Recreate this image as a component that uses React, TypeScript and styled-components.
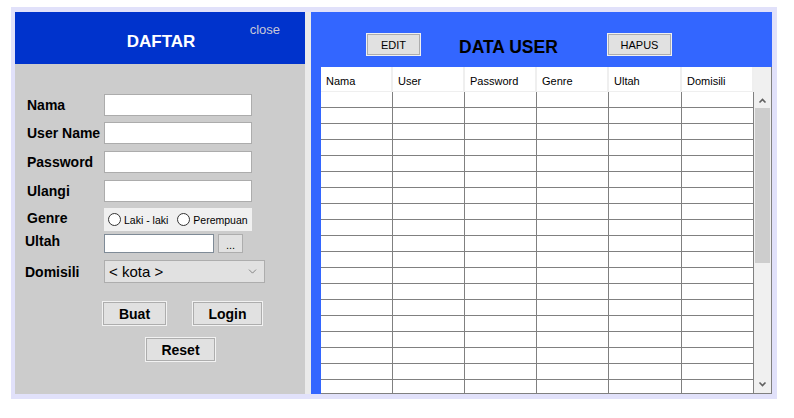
import React from "react";
import styled, { createGlobalStyle } from "styled-components";
import { ChevronDown } from "lucide-react";

const GlobalStyle = createGlobalStyle`
  html, body {
    margin: 0;
    padding: 0;
    background: #ffffff;
    font-family: "Liberation Sans", Arial, sans-serif;
  }
`;

const Frame = styled.div`
  margin: 7px 0 0 11px;
  width: 766px;
  height: 392px;
  box-sizing: border-box;
  padding: 5px 5px 5px 4px;
  background: #e1e1fa;
  display: flex;
`;

const LeftPanel = styled.div`
  width: 290px;
  display: flex;
  flex-direction: column;
  background: #cccccc;
`;

const Divider = styled.div`
  width: 6px;
  background: #eaeaea;
`;

const RightPanel = styled.div`
  width: 461px;
  display: flex;
  flex-direction: column;
  background: #3366ff;
  padding-left: 10px;
  box-sizing: border-box;
`;

const Header = styled.div`
  position: relative;
  height: 52px;
  background: #0033cc;
  display: flex;
  align-items: center;
  justify-content: center;
  padding: 8px 0 0 2px;
  box-sizing: border-box;
`;

const Title = styled.h1`
  margin: 0;
  font-size: 17px;
  font-weight: bold;
  color: #ffffff;
`;

const Close = styled.span`
  position: absolute;
  top: 10px;
  right: 25px;
  font-size: 13px;
  color: #c8c8d8;
  cursor: pointer;
`;

const Form = styled.div`
  display: flex;
  flex-direction: column;
  padding: 30px 0 0 12px;
`;

const Row = styled.div<{ $gap: number; $h: number }>`
  display: flex;
  align-items: center;
  height: ${({ $h }) => $h}px;
  margin-top: ${({ $gap }) => $gap}px;
`;

const Label = styled.label<{ $shift?: number; $raise?: number }>`
  flex-shrink: 0;
  width: ${({ $shift }) => 77 + ($shift || 0)}px;
  margin-left: ${({ $shift }) => -($shift || 0)}px;
  margin-top: ${({ $raise }) => -($raise || 0)}px;
  font-size: 14px;
  font-weight: bold;
  color: #000;
  white-space: nowrap;
`;

const TextInput = styled.input<{ $w: number; $dark?: boolean }>`
  flex-shrink: 0;
  width: ${({ $w }) => $w}px;
  height: 100%;
  box-sizing: border-box;
  border: 1px solid ${({ $dark }) => ($dark ? "#7f8b97" : "#acacac")};
  background: #ffffff;
  padding: 0 4px;
  outline: none;
`;

const RadioGroup = styled.div`
  flex-shrink: 0;
  width: 148px;
  height: 100%;
  background: #f0f0f0;
  display: flex;
  align-items: center;
  padding-left: 4px;
  box-sizing: border-box;
`;

const RadioOption = styled.label`
  display: flex;
  align-items: center;
  font-size: 10.5px;
  color: #000;
  white-space: nowrap;
  margin-right: 9px;
`;

const Circle = styled.span`
  flex-shrink: 0;
  width: 11px;
  height: 11px;
  border: 1px solid #333333;
  border-radius: 50%;
  background: #ffffff;
  margin-right: 3px;
`;

const SmallButton = styled.button`
  flex-shrink: 0;
  margin-left: 4px;
  width: 25px;
  height: 100%;
  box-sizing: border-box;
  background: #e1e1e1;
  border: 1px solid #adadad;
  font-family: "Liberation Sans", Arial, sans-serif;
  font-size: 11px;
  line-height: 1;
  padding: 4px 0 0;
`;

const Select = styled.div`
  flex-shrink: 0;
  width: 161px;
  height: 100%;
  box-sizing: border-box;
  background: #e1e1e1;
  border: 1px solid #adadad;
  display: flex;
  align-items: center;
  justify-content: space-between;
  padding: 0 5px 0 4px;
  font-size: 15px;
  color: #000;
`;

const ButtonRow = styled.div<{ $gap: number; $left: number }>`
  display: flex;
  gap: 25px;
  margin-top: ${({ $gap }) => $gap}px;
  padding-left: ${({ $left }) => $left - 12}px;
`;

const ActionButton = styled.button<{ $w: number }>`
  width: ${({ $w }) => $w}px;
  height: 25px;
  box-sizing: border-box;
  background: #e1e1e1;
  border: 1px solid #f2f2f2;
  box-shadow: inset 0 0 0 1px #adadad;
  font-family: "Liberation Sans", Arial, sans-serif;
  font-size: 14px;
  font-weight: bold;
  color: #000;
  padding: 0;
`;

const Toolbar = styled.div`
  height: 55px;
  display: flex;
  align-items: flex-start;
  padding: 21px 0 0 45px;
  box-sizing: border-box;
`;

const ToolButton = styled.button<{ $w: number }>`
  width: ${({ $w }) => $w}px;
  height: 23px;
  box-sizing: border-box;
  background: #e1e1e1;
  border: 1px solid #f0f0f0;
  box-shadow: inset 0 0 0 1px #adadad;
  font-family: "Liberation Sans", Arial, sans-serif;
  font-size: 11px;
  color: #000;
  padding: 0;
`;

const ToolTitle = styled.div`
  width: 148px;
  margin: 4px 0 0 38px;
  font-size: 17.5px;
  font-weight: bold;
  color: #000;
`;

const Table = styled.div`
  flex: 1;
  display: flex;
  flex-direction: column;
  border-right: 1px solid #808080;
  border-bottom: 1px solid #808080;
  overflow: hidden;
`;

const HeadRow = styled.div`
  display: grid;
  grid-template-columns: 72px 72px 72px 72px 73px 72px 1fr;
  height: 25px;
  flex-shrink: 0;
`;

const HeadCell = styled.div`
  background: #ffffff;
  border-right: 2px solid #efefef;
  border-bottom: 1px solid #efefef;
  font-size: 11px;
  color: #000;
  padding: 8px 0 0 5px;
  box-sizing: border-box;
`;

const HeadFiller = styled.div`
  background: #f0f0f0;
`;

const Body = styled.div`
  flex: 1;
  display: flex;
  overflow: hidden;
`;

const Rows = styled.div`
  width: 433px;
  display: flex;
  flex-direction: column;
`;

const DataRow = styled.div`
  display: grid;
  grid-template-columns: 72px 72px 72px 72px 73px 72px;
  height: 16px;
  flex-shrink: 0;
`;

const DataCell = styled.div`
  background: #ffffff;
  border-right: 1px solid #808080;
  border-bottom: 1px solid #808080;
`;

const Scrollbar = styled.div`
  flex: 1;
  background: #f0f0f0;
  display: flex;
  flex-direction: column;
  align-items: center;
  padding: 5px 0;
  box-sizing: border-box;
`;

const Thumb = styled.div`
  width: 15px;
  height: 155px;
  background: #cdcdcd;
  margin-top: 3px;
`;

const ArrowSpacer = styled.div`
  flex: 1;
`;

const Arrow = ({ down }: { down?: boolean }) => (
  <svg width="9" height="8" viewBox="0 0 9 8">
    <polyline
      points={down ? "1.5,2.5 4.5,5.5 7.5,2.5" : "1.5,5.5 4.5,2.5 7.5,5.5"}
      fill="none"
      stroke="#606060"
      strokeWidth="1.6"
    />
  </svg>
);

const headers = ["Nama", "User", "Password", "Genre", "Ultah", "Domisili"];

const App: React.FC = () => {
  const rows = Array.from({ length: 19 }, (_, i) => i);

  return (
    <>
      <GlobalStyle />
      <Frame>
        <LeftPanel>
          <Header>
            <Title>DAFTAR</Title>
            <Close>close</Close>
          </Header>
          <Form>
            <Row $gap={0} $h={22}>
              <Label>Nama</Label>
              <TextInput $w={148} />
            </Row>
            <Row $gap={6} $h={22}>
              <Label>User Name</Label>
              <TextInput $w={148} />
            </Row>
            <Row $gap={7} $h={22}>
              <Label>Password</Label>
              <TextInput type="password" $w={148} />
            </Row>
            <Row $gap={7} $h={22}>
              <Label>Ulangi</Label>
              <TextInput type="password" $w={148} />
            </Row>
            <Row $gap={6} $h={23}>
              <Label $raise={3}>Genre</Label>
              <RadioGroup>
                <RadioOption>
                  <Circle />
                  Laki - laki
                </RadioOption>
                <RadioOption>
                  <Circle />
                  Perempuan
                </RadioOption>
              </RadioGroup>
            </Row>
            <Row $gap={3} $h={19}>
              <Label $shift={2} $raise={5}>Ultah</Label>
              <TextInput $w={110} $dark />
              <SmallButton>...</SmallButton>
            </Row>
            <Row $gap={7} $h={23}>
              <Label $shift={2}>Domisili</Label>
              <Select>
                <span>&lt; kota &gt;</span>
                <ChevronDown size={13} strokeWidth={1.2} color="#555" />
              </Select>
            </Row>
            <ButtonRow $gap={18} $left={87}>
              <ActionButton $w={65}>Buat</ActionButton>
              <ActionButton $w={71}>Login</ActionButton>
            </ButtonRow>
            <ButtonRow $gap={11} $left={130}>
              <ActionButton $w={71}>Reset</ActionButton>
            </ButtonRow>
          </Form>
        </LeftPanel>
        <Divider />
        <RightPanel>
          <Toolbar>
            <ToolButton $w={55}>EDIT</ToolButton>
            <ToolTitle>DATA USER</ToolTitle>
            <ToolButton $w={65}>HAPUS</ToolButton>
          </Toolbar>
          <Table>
            <HeadRow>
              {headers.map((h) => (
                <HeadCell key={h}>{h}</HeadCell>
              ))}
              <HeadFiller />
            </HeadRow>
            <Body>
              <Rows>
                {rows.map((r) => (
                  <DataRow key={r}>
                    {headers.map((h) => (
                      <DataCell key={h} />
                    ))}
                  </DataRow>
                ))}
              </Rows>
              <Scrollbar>
                <Arrow />
                <Thumb />
                <ArrowSpacer />
                <Arrow down />
              </Scrollbar>
            </Body>
          </Table>
        </RightPanel>
      </Frame>
    </>
  );
};

export default App;
